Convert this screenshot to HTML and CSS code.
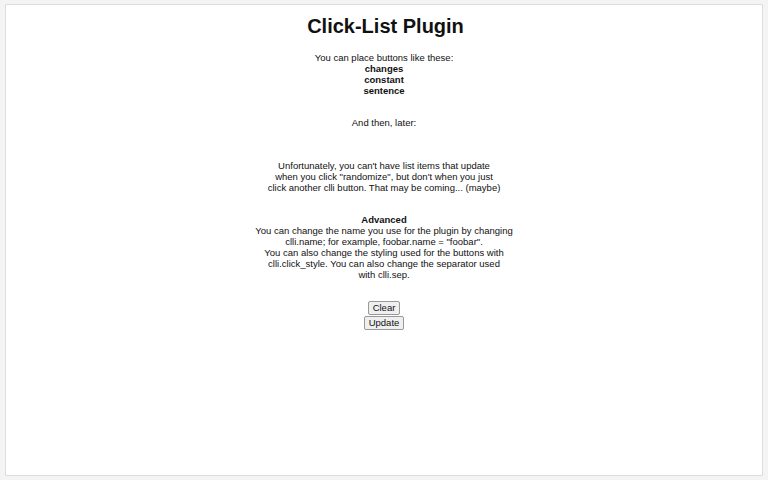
FILE: index.html
```html
<!DOCTYPE html>
<html lang="en">
<head>
    <meta charset="UTF-8">
    <title>Click-List Plugin</title>
    <link rel="stylesheet" href="styles.css">
</head>
<body>
    <div class="page">
        <h1>Click-List Plugin</h1>

        <div class="block">
            You can place buttons like these:<br>
            <b>changes</b><br>
            <b>constant</b><br>
            <b>sentence</b>
        </div>

        <div class="block">
            And then, later:
            <div class="later-list"><!-- clicked items go here --></div>
        </div>

        <div class="block">
            Unfortunately, you can't have list items that update<br>
            when you click "randomize", but don't when you just<br>
            click another clli button. That may be coming... (maybe)
        </div>

        <div class="block">
            <b>Advanced</b><br>
            You can change the name you use for the plugin by changing<br>
            clli.name; for example, foobar.name = "foobar".<br>
            You can also change the styling used for the buttons with<br>
            clli.click_style. You can also change the separator used<br>
            with clli.sep.
        </div>

        <div class="block controls">
            <button>Clear</button>
            <button>Update</button>
        </div>
    </div>
</body>
</html>
```

FILE: styles.css
```css
body { margin: 0; padding: 4px 5px; background-color: #f4f4f4; }
.page {
    height: 470px; background: white; border: 1px solid #dddddd;
    text-align: center; color: #111;
    font-family: "Liberation Sans", Arial, sans-serif; font-size: 9.5px; line-height: 11px;
}
h1 { margin: 10px 0 14px; padding-left: 3px; font-size: 20px; line-height: 23px; }
.block { margin-bottom: 21px; }
.later-list { min-height: 11px; }
.controls button {
    display: block; margin: 0 auto 1px; padding: 0 4px;
    font-family: "Liberation Sans", Arial, sans-serif; font-size: 9.5px; line-height: 12px;
    color: #111; background: #efefef; border: 1px solid #999999; border-radius: 2px;
}
```
